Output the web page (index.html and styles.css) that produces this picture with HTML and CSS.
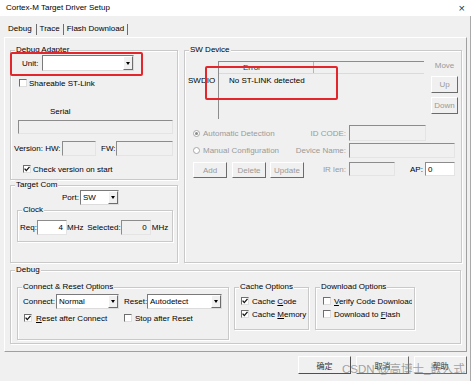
FILE: index.html
```html
<!DOCTYPE html>
<html lang="en">
<head>
    <meta charset="UTF-8">
    <meta name="viewport" content="width=device-width, initial-scale=1.0">
    <title>Cortex-M Target Driver Setup</title>
    <link rel="stylesheet" href="styles.css">
</head>
<body>
<div class="window">
    <header class="titlebar">
        <span>Cortex-M Target Driver Setup</span>
        <span class="close">×</span>
    </header>
    <div class="frame">
        <nav class="tabs">
            <span class="tab active">Debug</span>
            <span class="tab">Trace</span>
            <span class="tab">Flash Download</span>
        </nav>
        <div class="panel">
            <div class="top-row">
                <div class="left-col">
                    <!-- Debug Adapter -->
                    <div class="group adapter">
                        <span class="group-title">Debug Adapter</span>
                        <div class="row unit-row">
                            <span class="lbl-unit">Unit:</span>
                            <div class="select sel-unit"><span class="value"></span><i class="arrow"></i></div>
                        </div>
                        <div class="row share-row">
                            <span class="check"></span><span>Shareable ST-Link</span>
                        </div>
                        <div class="serial-label">Serial</div>
                        <div class="field serial-field"></div>
                        <div class="row version-row">
                            <span class="lbl-hw">Version: HW:</span>
                            <div class="field fld-hw"></div>
                            <span class="lbl-fw">FW:</span>
                            <div class="field fld-fw"></div>
                        </div>
                        <div class="row checkver-row">
                            <span class="check"><svg viewBox="0 0 6 6"><path d="M0.6 2.6 L2.3 4.6 L5.5 0.9"/></svg></span><span>Check version on start</span>
                        </div>
                    </div>
                    <!-- Target Com -->
                    <div class="group target">
                        <span class="group-title">Target Com</span>
                        <div class="row port-row">
                            <span class="lbl-port">Port:</span>
                            <div class="select sel-port"><span class="value">SW</span><i class="arrow"></i></div>
                        </div>
                        <div class="group clock">
                            <span class="group-title">Clock</span>
                            <div class="row req-row">
                                <span class="lbl-req">Req:</span>
                                <div class="field white num fld-req">4</div>
                                <span class="mhz">MHz</span>
                                <span class="lbl-sel">Selected:</span>
                                <div class="field num fld-sel">0</div>
                                <span class="mhz mhz-2">MHz</span>
                            </div>
                        </div>
                    </div>
                </div>
                <!-- SW Device -->
                <div class="group sw-device">
                    <span class="group-title">SW Device</span>
                    <div class="device-row">
                        <span class="swdio">SWDIO</span>
                        <div class="device-list">
                            <div class="list-head"><span>Error</span></div>
                            <div class="list-item">No ST-LINK detected</div>
                        </div>
                        <div class="move-col">
                            <div class="move-label">Move</div>
                            <div class="btn small up">Up</div>
                            <div class="btn small down">Down</div>
                        </div>
                    </div>
                    <div class="row detect-row">
                        <span class="opt"><span class="radio on"></span><span>Automatic Detection</span></span>
                        <span class="flabel">ID CODE:</span>
                        <div class="field fld-id"></div>
                    </div>
                    <div class="row manual-row">
                        <span class="opt"><span class="radio"></span><span>Manual Configuration</span></span>
                        <span class="flabel">Device Name:</span>
                        <div class="field fld-name"></div>
                    </div>
                    <div class="row action-row">
                        <div class="btn act add">Add</div>
                        <div class="btn act delete">Delete</div>
                        <div class="btn act update">Update</div>
                        <span class="flabel flabel-ir">IR len:</span>
                        <div class="field fld-ir"></div>
                        <span class="lbl-ap">AP:</span>
                        <div class="field white fld-ap">0</div>
                    </div>
                </div>
            </div>
            <!-- Debug -->
            <div class="group debug">
                <span class="group-title">Debug</span>
                <div class="debug-row">
                    <div class="group conn-group">
                        <span class="group-title">Connect &amp; Reset Options</span>
                        <div class="row conn-row">
                            <span class="lbl-conn">Connect:</span>
                            <div class="select sel-conn"><span class="value">Normal</span><i class="arrow"></i></div>
                            <span class="lbl-reset">Reset:</span>
                            <div class="select sel-reset"><span class="value">Autodetect</span><i class="arrow"></i></div>
                        </div>
                        <div class="row reset-row">
                            <span class="item item-first"><span class="check"><svg viewBox="0 0 6 6"><path d="M0.6 2.6 L2.3 4.6 L5.5 0.9"/></svg></span><span><u>R</u>eset after Connect</span></span>
                            <span class="item"><span class="check"></span><span>Stop after Reset</span></span>
                        </div>
                    </div>
                    <div class="group cache-group">
                        <span class="group-title">Cache Options</span>
                        <div class="row opt-row first">
                            <span class="check"><svg viewBox="0 0 6 6"><path d="M0.6 2.6 L2.3 4.6 L5.5 0.9"/></svg></span><span>Cache <u>C</u>ode</span>
                        </div>
                        <div class="row opt-row">
                            <span class="check"><svg viewBox="0 0 6 6"><path d="M0.6 2.6 L2.3 4.6 L5.5 0.9"/></svg></span><span>Cache <u>M</u>emory</span>
                        </div>
                    </div>
                    <div class="group dl-group">
                        <span class="group-title">Download Options</span>
                        <div class="row opt-row first">
                            <span class="check"></span><span><u>V</u>erify Code Download</span>
                        </div>
                        <div class="row opt-row">
                            <span class="check"></span><span>Download to <u>F</u>lash</span>
                        </div>
                    </div>
                </div>
            </div>
        </div>
        <div class="buttons">
            <div class="btn dlg default">确定</div>
            <div class="btn dlg">取消</div>
            <div class="btn dlg">帮助</div>
        </div>
    </div>

    <!-- annotations drawn over the dialog -->
    <div class="highlight hl-unit"></div>
    <div class="highlight hl-swd"></div>
    <div class="watermark">CSDN @高博士_嵌入式</div>
</div>
</body>
</html>
```

FILE: styles.css
```css
* {
    box-sizing: border-box;
}

body {
    margin: 0;
    background-color: #fff;
    font-family: "Liberation Sans", Arial, sans-serif;
    font-size: 8px;
    color: #000;
}

.window {
    position: relative;
    width: 474px;
    height: 381px;
    overflow: hidden;
}

/* title bar */
.titlebar {
    height: 16px;
    display: flex;
    align-items: center;
    justify-content: space-between;
    padding: 0 9px 1px 6px;
    background-color: #fff;
}

.close {
    font-size: 11px;
    color: #333;
}

.frame {
    width: 471px;
    height: 365px;
    background-color: #f0f0f0;
    border-right: 1px solid #a9a9a9;
    padding-top: 8px;
}

/* tabs */
.tabs {
    display: flex;
    height: 13px;
    padding-left: 4px;
}

.tab {
    height: 11px;
    line-height: 10px;
    padding: 0 3px;
    border-right: 1px solid #6d6d6d;
}

.tab.active {
    padding: 0 4px;
}

.panel {
    width: 463px;
    height: 315px;
    margin-left: 4px;
    border: 1px solid;
    border-color: #fff #a0a0a0 #a0a0a0 #fff;
    padding: 12px 4px 0 5px;
}

.top-row {
    display: flex;
    gap: 6px;
    height: 213px;
}

.left-col {
    width: 168px;
    display: flex;
    flex-direction: column;
    gap: 5px;
}

/* group boxes */
.group {
    position: relative;
    border: 1px solid #c9c9c9;
    box-shadow: inset 1px 1px 0 #fff, 1px 1px 0 #fff;
}

.group-title {
    position: absolute;
    top: -6px;
    left: 4px;
    padding: 0 1px;
    line-height: 10px;
    background-color: #f0f0f0;
    white-space: nowrap;
}

.row {
    display: flex;
    align-items: center;
    white-space: nowrap;
}

/* controls */
.select {
    display: flex;
    height: 100%;
    background-color: #fff;
    border: 1px solid;
    border-color: #7a7a7a #dcdcdc #dcdcdc #7a7a7a;
}

.select .value {
    flex: 1;
    display: flex;
    align-items: center;
    padding-left: 2px;
}

.arrow {
    width: 10px;
    display: flex;
    align-items: center;
    justify-content: center;
    background-color: #f0f0f0;
    border: 1px solid;
    border-color: #fff #6d6d6d #6d6d6d #fff;
}

.arrow::after {
    content: "";
    border-left: 2px solid transparent;
    border-right: 2px solid transparent;
    border-top: 3px solid #000;
}

.field {
    height: 100%;
    background-color: #f0f0f0;
    border: 1px solid;
    border-color: #8c8c8c #e4e4e4 #e4e4e4 #8c8c8c;
}

.field.white {
    background-color: #fff;
}

.field.num {
    display: flex;
    align-items: center;
    justify-content: flex-end;
    padding-right: 3px;
}

.check {
    flex: none;
    width: 8px;
    height: 8px;
    margin-right: 2px;
    background-color: #fff;
    border: 1px solid;
    border-color: #6e6e6e #dedede #dedede #6e6e6e;
    display: flex;
}

.check svg {
    width: 6px;
    height: 6px;
}

.check path {
    fill: none;
    stroke: #111;
    stroke-width: 1.3;
}

.radio {
    width: 7px;
    height: 7px;
    margin-right: 3px;
    border-radius: 50%;
    border: 1px solid #a8a8a8;
    background-color: #fff;
    display: inline-flex;
    align-items: center;
    justify-content: center;
}

.radio.on::after {
    content: "";
    width: 3px;
    height: 3px;
    border-radius: 50%;
    background-color: #8a8a8a;
}

.btn {
    display: flex;
    align-items: center;
    justify-content: center;
    background-color: #f0f0f0;
    border: 1px solid;
    border-color: #fff #6b6b6b #6b6b6b #fff;
    color: #9a9a9a;
}

/* Debug Adapter */
.adapter {
    height: 130px;
}

.unit-row {
    margin-top: 4px;
    height: 16px;
    padding-left: 11px;
}

.lbl-unit {
    width: 20px;
}

.sel-unit {
    width: 92px;
}

.share-row {
    margin-top: 7px;
    height: 10px;
    padding-left: 8px;
}

.serial-label {
    margin-top: 19px;
    padding-left: 39px;
    line-height: 10px;
}

.serial-field {
    width: 155px;
    height: 14px;
    margin: 3px 0 0 7px;
}

.version-row {
    margin-top: 7px;
    height: 15px;
    padding-left: 3px;
}

.lbl-hw {
    width: 48px;
}

.fld-hw {
    width: 34px;
}

.lbl-fw {
    width: 15px;
    margin-left: 5px;
}

.fld-fw {
    width: 57px;
}

.checkver-row {
    margin-top: 8px;
    height: 10px;
    padding-left: 12px;
}

/* Target Com */
.target {
    height: 78px;
}

.port-row {
    margin-top: 4px;
    height: 15px;
    padding-left: 51px;
}

.lbl-port {
    width: 18px;
}

.sel-port {
    width: 39px;
}

.clock {
    width: 156px;
    height: 32px;
    margin: 5px 0 0 6px;
}

.req-row {
    margin-top: 9px;
    height: 15px;
    padding-left: 2px;
}

.lbl-req {
    width: 17px;
}

.fld-req,
.fld-sel {
    width: 31px;
}

.mhz {
    width: 21px;
}

.mhz-2 {
    margin-left: 1px;
}

.lbl-sel {
    width: 34px;
}

/* SW Device */
.sw-device {
    width: 278px;
    height: 213px;
}

.device-row {
    display: flex;
    margin-top: 10px;
    height: 58px;
}

.swdio {
    width: 33px;
    padding-left: 3px;
    margin-top: 15px;
    line-height: 10px;
}

.device-list {
    width: 206px;
    border-left: 1px solid #8c8c8c;
    border-top: 1px solid #8c8c8c;
}

.list-head {
    display: flex;
    height: 12px;
    border-bottom: 1px solid #dadada;
}

.list-head span {
    width: 95px;
    padding-left: 24px;
    line-height: 11px;
    border-right: 1px solid #b5b5b5;
    color: #333;
}

.list-item {
    margin-top: 2px;
    padding-left: 10px;
    line-height: 10px;
}

.move-col {
    width: 27px;
    margin-left: 7px;
}

.move-label {
    line-height: 10px;
    text-align: center;
    color: #9a9a9a;
}

.btn.small {
    height: 17px;
}

.btn.up {
    margin-top: 5px;
}

.btn.down {
    margin-top: 4px;
}

.detect-row {
    margin-top: 6px;
    height: 16px;
}

.manual-row {
    margin-top: 2px;
    height: 15px;
}

.opt {
    width: 105px;
    padding-left: 8px;
    display: flex;
    align-items: center;
    color: #9a9a9a;
}

.flabel {
    width: 59px;
    padding-right: 3px;
    text-align: right;
    color: #9a9a9a;
}

.fld-id {
    width: 77px;
}

.fld-name {
    width: 106px;
}

.action-row {
    margin-top: 4px;
    height: 16px;
    align-items: flex-start;
}

.action-row .field,
.action-row .lbl-ap,
.action-row .flabel {
    height: 14px;
    display: flex;
    align-items: center;
}

.btn.act {
    width: 34px;
    height: 16px;
}

.btn.add {
    margin-left: 8px;
}

.btn.delete {
    margin-left: 5px;
}

.btn.update {
    margin-left: 4px;
}

.flabel.flabel-ir {
    width: 45px;
    justify-content: flex-end;
}

.fld-ir {
    width: 46px;
}

.lbl-ap {
    width: 15px;
    margin-left: 15px;
}

.fld-ap {
    width: 30px;
    padding-left: 2px;
}

/* Debug */
.debug {
    width: 451px;
    height: 74px;
    margin-top: 7px;
}

.debug-row {
    display: flex;
    align-items: flex-start;
    margin-top: 16px;
    padding-left: 6px;
}

.conn-group {
    width: 212px;
    height: 53px;
}

.conn-row {
    margin-top: 6px;
    height: 15px;
    padding-left: 5px;
}

.lbl-conn {
    width: 33px;
}

.sel-conn {
    width: 63px;
}

.lbl-reset {
    width: 23px;
    margin-left: 5px;
}

.sel-reset {
    width: 75px;
}

.reset-row {
    margin-top: 4px;
    height: 10px;
    padding-left: 6px;
}

.item {
    display: flex;
    align-items: center;
}

.item .check {
    margin-right: 3px;
}

.item-first {
    width: 100px;
}

.item-first .check {
    margin-right: 4px;
}

.cache-group {
    width: 75px;
    height: 43px;
    margin-left: 5px;
}

.dl-group {
    width: 100px;
    height: 43px;
    margin-left: 6px;
}

.opt-row {
    height: 10px;
    margin-top: 3px;
    padding-left: 6px;
}

.opt-row.first {
    margin-top: 8px;
}

.dl-group .opt-row {
    width: 96px;
    padding-left: 7px;
    overflow: hidden;
}

.opt-row .check {
    margin-right: 3px;
}

/* dialog buttons */
.buttons {
    display: flex;
    justify-content: flex-end;
    gap: 5px;
    margin-top: 4px;
    padding-right: 3px;
}

.btn.dlg {
    width: 53px;
    height: 18px;
    color: #333;
    font-family: "Noto Sans CJK SC", sans-serif;
    font-size: 8px;
}

.btn.default {
    border-color: #fff #505050 #505050 #fff;
}

/* overlays */
.highlight {
    position: absolute;
    border: 2px solid #e3262b;
    border-radius: 2px;
}

.hl-unit {
    left: 10px;
    top: 52px;
    width: 133px;
    height: 24px;
}

.hl-swd {
    left: 205px;
    top: 66px;
    width: 133px;
    height: 34px;
}

.watermark {
    position: absolute;
    left: 342px;
    top: 363px;
    font-family: "Liberation Sans", "Noto Sans CJK SC", sans-serif;
    font-size: 11.5px;
    line-height: 13px;
    color: rgba(125, 125, 125, 0.7);
    white-space: nowrap;
}
```
